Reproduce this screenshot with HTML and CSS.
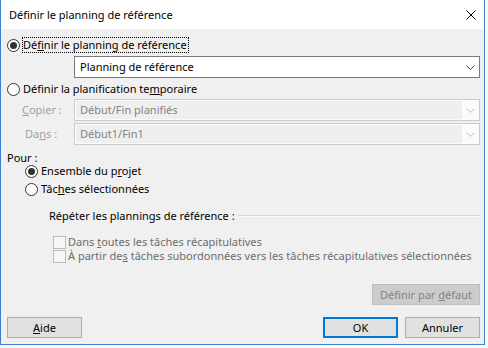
FILE: index.html
```html
<!DOCTYPE html>
<html>
  <head>
    <title>Définir le planning de référence</title>
    <meta charset="UTF-8">
    <meta name="viewport" content="width=device-width, initial-scale=1.0">
    <link rel="stylesheet" href="styles.css">
  </head>
  <body>
    <div class="dialog">
      <div class="titlebar">
        <span class="title">Définir le planning de référence</span>
        <svg class="close" width="10" height="10" viewBox="0 0 10 10">
          <path d="M0.5 0.5L9.5 9.5M9.5 0.5L0.5 9.5" stroke="#000" stroke-width="1" fill="none"/>
        </svg>
      </div>
      <div class="content">
        <div class="row row-first">
          <span class="radio checked"></span>
          <span class="label focus">Dé<u>f</u>inir le planning de référence</span>
        </div>
        <div class="combo combo-main">
          <span class="combo-text">Planning de référence</span>
          <span class="combo-arrow">
            <svg width="9" height="5" viewBox="0 0 9 5"><polyline points="0.5,0.5 4.5,4.5 8.5,0.5" stroke="#404040" fill="none"/></svg>
          </span>
        </div>
        <div class="row row-second">
          <span class="radio"></span>
          <span class="label">Définir la planification te<u>m</u>poraire</span>
        </div>
        <div class="field field-copier">
          <span class="field-label label-copier"><u>C</u>opier :</span>
          <div class="combo disabled">
            <span class="combo-text">Début/Fin planifiés</span>
            <span class="combo-arrow">
              <svg width="9" height="5" viewBox="0 0 9 5"><polyline points="0.5,0.5 4.5,4.5 8.5,0.5" stroke="#bfbfbf" fill="none"/></svg>
            </span>
          </div>
        </div>
        <div class="field field-dans">
          <span class="field-label label-dans">Da<u>n</u>s :</span>
          <div class="combo disabled">
            <span class="combo-text">Début1/Fin1</span>
            <span class="combo-arrow">
              <svg width="9" height="5" viewBox="0 0 9 5"><polyline points="0.5,0.5 4.5,4.5 8.5,0.5" stroke="#bfbfbf" fill="none"/></svg>
            </span>
          </div>
        </div>
        <div class="row row-pour">
          <span class="label-plain">Pour :</span>
        </div>
        <div class="row row-sub row-ensemble">
          <span class="radio checked"></span>
          <span class="label">Ensemble du p<u>r</u>ojet</span>
        </div>
        <div class="row row-sub row-taches">
          <span class="radio"></span>
          <span class="label">Tâc<u>h</u>es sélectionnées</span>
        </div>
        <div class="row row-group">
          <span class="group-title">Répéter les plannings de référence :</span>
          <span class="groove"></span>
        </div>
        <div class="row row-check row-check-first">
          <span class="checkbox"></span>
          <span class="check-label">Dans <u>t</u>outes les tâches récapitulatives</span>
        </div>
        <div class="row row-check">
          <span class="checkbox"></span>
          <span class="check-label">À partir de<u>s</u> tâches subordonnées vers les tâches récapitulatives sélectionnées</span>
        </div>
        <div class="default-row">
          <button class="btn btn-wide" disabled>Définir par <u>d</u>éfaut</button>
        </div>
        <div class="button-row">
          <button class="btn"><u>A</u>ide</button>
          <div class="button-group">
            <button class="btn btn-default">OK</button>
            <button class="btn">Annuler</button>
          </div>
        </div>
      </div>
    </div>
  </body>
</html>
```

FILE: styles.css
```css
/* Style rules for the baseline dialog */
body {
  margin: 0;
  padding: 0;
  background-color: #ffffff;
  font-family: "Noto Sans", "Open Sans", sans-serif;
  font-size: 11px;
  color: #000;
}

u {
  text-decoration-thickness: 1px;
  text-underline-offset: 1px;
}

.dialog {
  width: 485px;
  height: 345px;
  box-sizing: border-box;
  border: 1px solid #3a80d2;
  border-top: none;
  display: flex;
  flex-direction: column;
}

.titlebar {
  height: 29px;
  flex-shrink: 0;
  background-color: #fff;
  display: flex;
  align-items: center;
  justify-content: space-between;
  padding: 0 8px;
}

.title {
  line-height: 14px;
}

.content {
  flex: 1;
  background-color: #f0f0f0;
  padding: 8px 4px 6px 6px;
  display: flex;
  flex-direction: column;
}

.row {
  display: flex;
  align-items: center;
  height: 14px;
  line-height: 14px;
  white-space: nowrap;
}

.row-first {
  height: 16px;
}

.row-second {
  height: 16px;
  margin-top: 3px;
}

.radio {
  width: 13px;
  height: 13px;
  box-sizing: border-box;
  border: 1px solid #333;
  border-radius: 50%;
  background-color: #fff;
  display: flex;
  align-items: center;
  justify-content: center;
  flex-shrink: 0;
}

.radio.checked::after {
  content: "";
  width: 7px;
  height: 7px;
  border-radius: 50%;
  background-color: #333;
}

.label {
  margin-left: 3px;
}

.label.focus {
  margin-left: 2px;
  border: 1px dotted #000;
  padding-right: 1px;
}

.combo {
  height: 22px;
  box-sizing: border-box;
  border: 1px solid #7a7a7a;
  background-color: #fff;
  display: flex;
  align-items: center;
  flex: 1;
}

.combo-main {
  margin-top: 3px;
  margin-left: 67px;
  flex: none;
}

.combo-text {
  flex: 1;
  padding-left: 5px;
  line-height: 14px;
}

.combo-arrow {
  width: 17px;
  align-self: stretch;
  display: flex;
  align-items: center;
  justify-content: center;
}

.combo.disabled {
  border-color: #cccccc;
  background-color: #efefef;
  box-shadow: inset 0 0 0 1px #fbfbfb;
  color: #838383;
}

.combo.disabled .combo-arrow {
  background-color: #fbfbfb;
}

.field {
  display: flex;
  align-items: center;
  margin-top: 2px;
}

.field-label {
  color: #a0a0a0;
  line-height: 14px;
}

.label-copier {
  margin-left: 15px;
  width: 52px;
}

.label-dans {
  margin-left: 18px;
  width: 49px;
}

.row-pour {
  height: 12px;
  margin-top: 7px;
}

.row-sub .radio {
  margin-left: 18px;
}

.row-taches {
  margin-top: 4px;
}

.row-group {
  margin-top: 13px;
}

.group-title {
  margin-left: 42px;
}

.groove {
  flex: 1;
  margin-left: 3px;
  border-top: 1px solid #d8d8d8;
  border-bottom: 1px solid #fbfbfb;
}

.row-check-first {
  margin-top: 12px;
}

.checkbox {
  width: 13px;
  height: 13px;
  box-sizing: border-box;
  border: 1px solid #bcbcbc;
  background-color: #f6f6f6;
  margin-left: 46px;
  flex-shrink: 0;
}

.check-label {
  margin-left: 2px;
  color: #6d6d6d;
}

.default-row {
  display: flex;
  justify-content: flex-end;
  margin-top: 21px;
}

.button-row {
  display: flex;
  justify-content: space-between;
  margin-top: 12px;
}

.button-group {
  display: flex;
  gap: 7px;
}

.btn {
  width: 75px;
  height: 21px;
  box-sizing: border-box;
  padding: 0;
  border: 1px solid #adadad;
  background-color: #e1e1e1;
  font-family: inherit;
  font-size: 11px;
  color: #000;
  line-height: 14px;
}

.btn-wide {
  width: 108px;
}

.btn:disabled {
  background-color: #cccccc;
  border-color: #bfbfbf;
  color: #838383;
}

.btn-default {
  border-color: #0078d7;
  box-shadow: inset 0 0 0 1px #0078d7;
}
```
